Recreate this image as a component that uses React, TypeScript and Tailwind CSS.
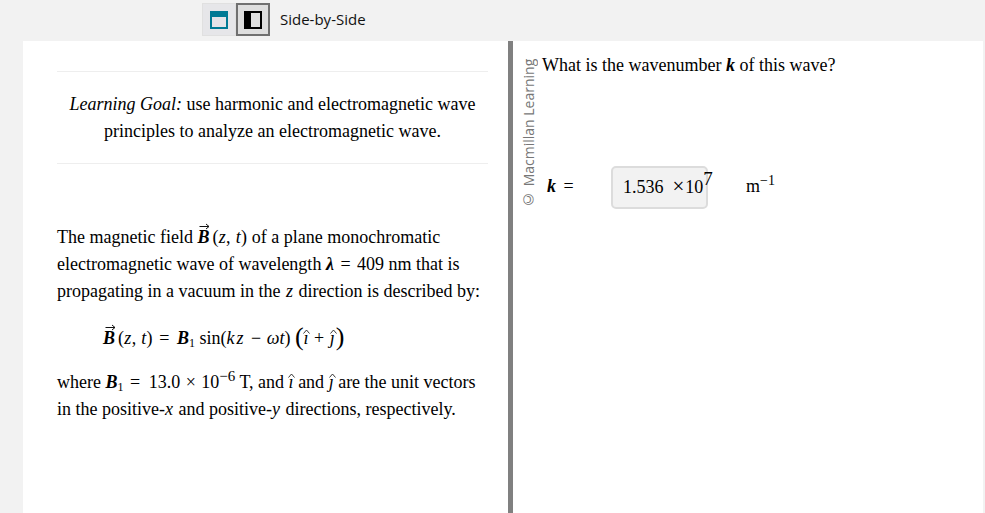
function VecB() {
  return (
    <span className="relative inline-block font-bold italic">
      B
      <svg className="absolute left-[2px] top-[-1px]" width="11" height="7" viewBox="0 0 11 7">
        <path d="M0.5 3.5H10M7 1l3 2.5L7 6" fill="none" stroke="#111" strokeWidth="1" />
      </svg>
    </span>
  )
}

function B1() {
  return (
    <span>
      <b><i>B</i></b>
      <span className="relative top-[3px] text-[12px] leading-none">1</span>
    </span>
  )
}

function ZT() {
  return <span className="ml-[3px] tracking-[0.3px]">(<i>z</i>, <i>t</i>)</span>
}

// unit vector: dotless letter with a small caret drawn on top
function Hat({ c, left }: { c: string; left: number }) {
  return (
    <span className="relative inline-block italic">
      {c}
      <svg className="absolute top-[4px]" style={{ left }} width="7" height="5" viewBox="0 0 7 5">
        <path d="M0.5 4.5L3.5 1l3 3.5" fill="none" stroke="#222" strokeWidth="0.9" />
      </svg>
    </span>
  )
}

export default function App() {
  return (
    <div className="h-[513px] w-[985px] overflow-hidden bg-[#f2f2f2] font-['Liberation_Serif',serif] text-[18px] leading-[27px] text-black">
      <div className="flex h-[41px] items-start pl-[202px] pt-[3px]">
        <button className="flex h-[33px] w-[34px] items-center justify-center border border-[#e0e0e0] bg-[#e6e6e9]">
          <svg width="18" height="18" viewBox="0 0 18 18">
            <rect x="0" y="0" width="18" height="18" fill="#007a94" />
            <rect x="2" y="6" width="14" height="10" fill="#e4e4e8" />
          </svg>
        </button>
        <button className="flex h-[33px] w-[34px] items-center justify-center border-2 border-[#707070] bg-[#dedede]">
          <svg width="18" height="18" viewBox="0 0 18 18">
            <rect x="0" y="0" width="18" height="18" fill="#000" />
            <rect x="7" y="2" width="9" height="14" fill="#dedede" />
          </svg>
        </button>
        <span className="ml-[10px] mt-[3px] font-['Open_Sans',sans-serif] text-[15px] leading-[27px] text-[#111]">Side-by-Side</span>
      </div>

      <div className="ml-[23px] mr-[2px] flex h-[472px] bg-white">
        <div className="w-[485px] pl-[34px] pr-[20px] pt-[30px]">
          <div className="border-y border-[#eeeeee] pb-[18px] pt-[19px] text-center">
            <div><i>Learning Goal:</i> use harmonic and electromagnetic wave</div>
            <div>principles to analyze an electromagnetic wave.</div>
          </div>
          <div className="mt-[60px] whitespace-nowrap">
            <div>The magnetic field <VecB /><ZT /> of a plane monochromatic</div>
            <div>electromagnetic wave of wavelength <b><i>λ</i></b> <span className="mx-[2px]">=</span> 409 nm that is</div>
            <div>propagating in a vacuum in the <i className="mx-[1px]">z</i> direction is described by:</div>
          </div>
          <div className="mt-[20px] whitespace-nowrap pl-[46px]">
            <VecB /><ZT /> <span className="mx-[2px]">=</span> <span className="ml-[1px]"><B1 /></span> sin(<i className="tracking-[2px]">kz</i> <span className="mx-[1px]">−</span> <i>ωt</i>) <span className="relative top-[1px] text-[26px] leading-[20px]">(</span><Hat c="ı" left={-1} /> <span className="mx-[1px]">+</span> <Hat c="ȷ" left={0} /><span className="relative top-[1px] ml-[1px] text-[26px] leading-[20px]">)</span>
          </div>
          <div className="mt-[17px] whitespace-nowrap">
            <div>where <B1 /> <span className="mx-[2px]">=</span> <span className="ml-[2px]">13.0</span> <span className="mx-[1px]">×</span> 10<span className="relative top-[-7px] text-[15px] leading-none">−6</span> T, and <Hat c="ı" left={-1} /> and <Hat c="ȷ" left={0} /> are the unit vectors</div>
            <div>in the positive-<i className="mr-[1px]">x</i> and positive-<i className="mr-[1px]">y</i> directions, respectively.</div>
          </div>
        </div>

        <div className="w-[5px] bg-[#808080]" />

        <div className="flex flex-1 items-start pl-[8px]">
          <div className="mt-[17px] h-[152px] rotate-180 text-center font-['Open_Sans',sans-serif] text-[14px] leading-[15px] text-[#777] [writing-mode:vertical-rl]">
            © Macmillan Learning
          </div>
          <div className="ml-[6px] pt-[11px]">
            <div>What is the wavenumber <b><i>k</i></b> of this wave?</div>
            <div className="mt-[87px] flex items-start pl-[5px]">
              <div className="w-[64px] whitespace-nowrap pt-[7px]"><b><i>k</i></b> <span className="mx-[3px]">=</span></div>
              <div className="flex h-[43px] w-[97px] items-center whitespace-nowrap rounded-[5px] border-2 border-[#dcdcdc] bg-[#f2f2f2] pl-[10px]">
                <span>1.536&nbsp; <span className="mr-[1px] text-[21px] leading-none">×</span>10<span className="relative top-[-8px] text-[19px] leading-none">7</span></span>
              </div>
              <div className="ml-[38px] whitespace-nowrap pt-[7px]">m<span className="relative top-[-7px] text-[14px] leading-none">−1</span></div>
            </div>
          </div>
        </div>
      </div>
    </div>
  )
}
